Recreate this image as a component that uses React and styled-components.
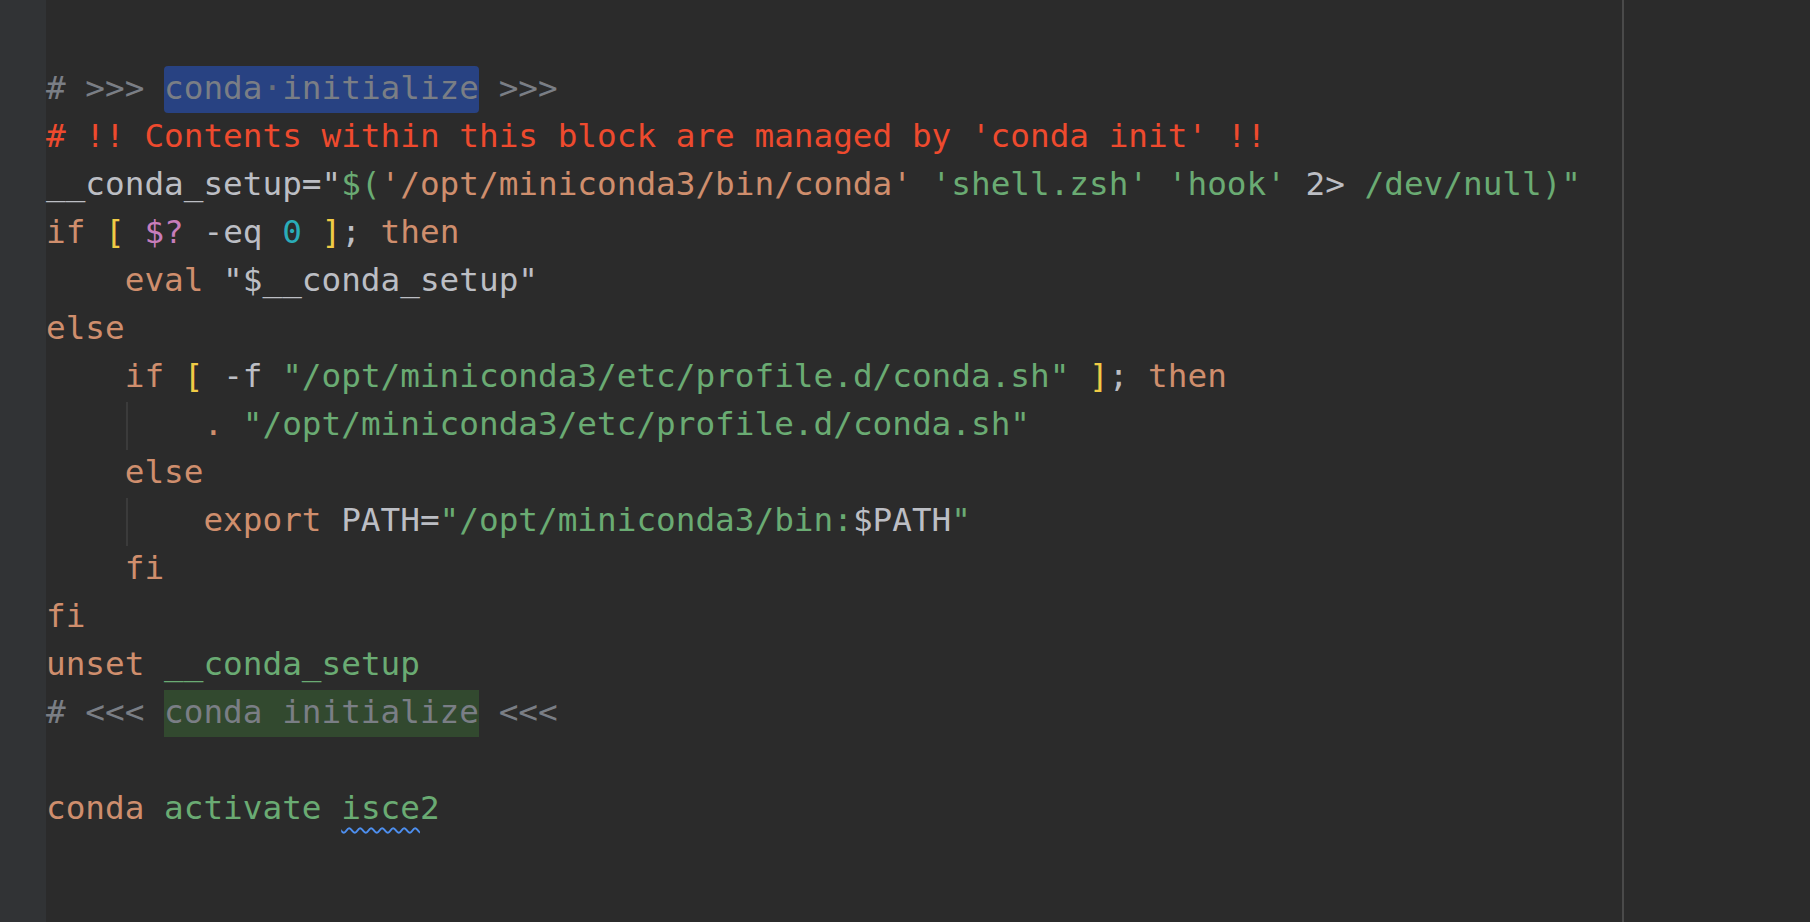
import React from "react";
import styled, { createGlobalStyle, css } from "styled-components";

const Global = createGlobalStyle`
  html, body {
    margin: 0;
    padding: 0;
    background: #2b2b2b;
    overflow: hidden;
  }
`;

const C = {
  txt: "#bcbec4",
  kw: "#cf8e6d",
  str: "#6aab73",
  cm: "#7a7e85",
  red: "#ee4a2e",
  num: "#2aacb8",
  var: "#c77dbb",
  br: "#f0cb45",
};

const Editor = styled.div`
  display: flex;
  width: 1810px;
  height: 922px;
  background: #2b2b2b;
`;

const Gutter = styled.div`
  flex: 0 0 46px;
  background: #313335;
`;

const Code = styled.div`
  position: relative;
  flex: 1;
  padding-top: 66px;
  font-family: "DejaVu Sans Mono", "Liberation Mono", monospace;
  font-size: 32.7px;
  color: ${C.txt};
  white-space: pre;

  &::after {
    content: "";
    position: absolute;
    top: 0;
    bottom: 0;
    left: 1576px;
    width: 2px;
    background: #4a4a4a;
  }
`;

const Line = styled.div`
  position: relative;
  height: 48px;
  line-height: 44px;
  ${(p) =>
    p.$guide &&
    css`
      &::before {
        content: "";
        position: absolute;
        left: 80px;
        top: 0;
        bottom: 0;
        width: 2px;
        background: #3b3b3b;
      }
    `}
`;

const Tok = styled.span`
  color: ${(p) => C[p.$k] || C.txt};
`;

const Mark = styled.span`
  color: ${C.cm};
  background: ${(p) => (p.$tone === "blue" ? "#284282" : "#32492f")};
  border-radius: ${(p) => (p.$tone === "blue" ? "4px" : "0")};
  padding: 3px 0 6px;
`;

const Dot = styled.span`
  color: #6a6f7a;
`;

const Typo = styled.span`
  text-decoration: underline wavy #4d8ff0;
  text-decoration-thickness: 2px;
  text-underline-offset: 8px;
`;

const lines = [
  {
    t: [
      ["# >>> ", "cm"],
      [
        "mark",
        "blue",
        <>
          conda<Dot>·</Dot>initialize
        </>,
      ],
      [" >>>", "cm"],
    ],
  },
  { t: [["# !! Contents within this block are managed by 'conda init' !!", "red"]] },
  {
    t: [
      ["__conda_setup=\"", "txt"],
      ["$(", "str"],
      ["'/opt/miniconda3/bin/conda'", "kw"],
      [" ", "txt"],
      ["'shell.zsh'", "str"],
      [" ", "txt"],
      ["'hook'", "str"],
      [" 2> ", "txt"],
      ["/dev/null)\"", "str"],
    ],
  },
  {
    t: [
      ["if ", "kw"],
      ["[", "br"],
      [" ", "txt"],
      ["$?", "var"],
      [" -eq ", "txt"],
      ["0", "num"],
      [" ", "txt"],
      ["]", "br"],
      ["; ", "txt"],
      ["then", "kw"],
    ],
  },
  { t: [["    eval", "kw"], [" \"$__conda_setup\"", "txt"]] },
  { t: [["else", "kw"]] },
  {
    t: [
      ["    if ", "kw"],
      ["[", "br"],
      [" -f ", "txt"],
      ["\"/opt/miniconda3/etc/profile.d/conda.sh\"", "str"],
      [" ", "txt"],
      ["]", "br"],
      ["; ", "txt"],
      ["then", "kw"],
    ],
  },
  {
    guide: true,
    t: [
      ["        .", "kw"],
      [" ", "txt"],
      ["\"/opt/miniconda3/etc/profile.d/conda.sh\"", "str"],
    ],
  },
  { t: [["    else", "kw"]] },
  {
    guide: true,
    t: [
      ["        export", "kw"],
      [" PATH=", "txt"],
      ["\"/opt/miniconda3/bin:", "str"],
      ["$PATH", "txt"],
      ["\"", "str"],
    ],
  },
  { t: [["    fi", "kw"]] },
  { t: [["fi", "kw"]] },
  { t: [["unset", "kw"], [" __conda_setup", "str"]] },
  {
    t: [
      ["# <<< ", "cm"],
      ["mark", "green", "conda initialize"],
      [" <<<", "cm"],
    ],
  },
  { t: [] },
  {
    t: [
      ["conda", "kw"],
      [" activate ", "str"],
      ["typo", "isce"],
      ["2", "str"],
    ],
  },
];

function renderTok(tok, i) {
  if (tok[0] === "mark") {
    return (
      <Mark key={i} $tone={tok[1]}>
        {tok[2]}
      </Mark>
    );
  }
  if (tok[0] === "typo") {
    return (
      <Tok key={i} $k="str">
        <Typo>{tok[1]}</Typo>
      </Tok>
    );
  }
  return (
    <Tok key={i} $k={tok[1]}>
      {tok[0]}
    </Tok>
  );
}

export default function App() {
  return (
    <>
      <Global />
      <Editor>
        <Gutter />
        <Code>
          {lines.map((l, i) => (
            <Line key={i} $guide={l.guide}>
              {l.t.map(renderTok)}
            </Line>
          ))}
        </Code>
      </Editor>
    </>
  );
}
